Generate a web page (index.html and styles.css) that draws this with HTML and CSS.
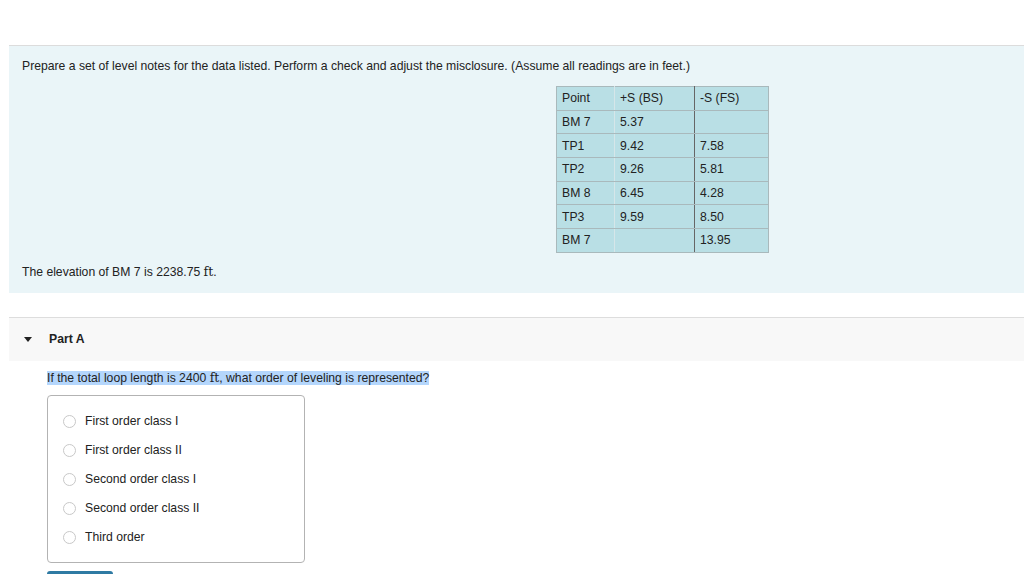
FILE: index.html
```html
<!DOCTYPE html>
<html>
<head>
<meta charset="utf-8">
<link rel="stylesheet" href="styles.css">
</head>
<body>
<div class="page">
  <div class="intro">
    <p class="lead">Prepare a set of level notes for the data listed. Perform a check and adjust the misclosure. (Assume all readings are in feet.)</p>
    <table class="data">
      <tr><td class="c1">Point</td><td class="c2">+S (BS)</td><td class="c3">-S (FS)</td></tr>
      <tr><td>BM 7</td><td>5.37</td><td></td></tr>
      <tr><td>TP1</td><td>9.42</td><td>7.58</td></tr>
      <tr><td>TP2</td><td>9.26</td><td>5.81</td></tr>
      <tr><td>BM 8</td><td>6.45</td><td>4.28</td></tr>
      <tr><td>TP3</td><td>9.59</td><td>8.50</td></tr>
      <tr><td>BM 7</td><td></td><td>13.95</td></tr>
    </table>
    <p class="elev">The elevation of BM 7 is 2238.75 <span class="unit">ft</span>.</p>
  </div>
  <div class="part-head">
    <span class="tri"></span><span class="part-title">Part A</span>
  </div>
  <div class="part-body">
    <p class="question"><span class="hl">If the total loop length is 2400 <span class="unit">ft</span>, what order of leveling is represented?</span></p>
    <div class="choices">
      <label class="choice"><span class="radio"></span>First order class I</label>
      <label class="choice"><span class="radio"></span>First order class II</label>
      <label class="choice"><span class="radio"></span>Second order class I</label>
      <label class="choice"><span class="radio"></span>Second order class II</label>
      <label class="choice"><span class="radio"></span>Third order</label>
    </div>
    <div class="submit"></div>
  </div>
</div>
</body>
</html>
```
FILE: styles.css
```css
html, body {
  margin: 0;
  padding: 0;
  background: #ffffff;
  overflow: hidden;
}
body {
  font-family: "Liberation Sans", Arial, Helvetica, sans-serif;
  font-size: 12.2px;
  color: #222222;
}
.page {
  padding-left: 9px;
  padding-top: 45px;
}
.intro {
  background: #eaf5f8;
  border-top: 1px solid #dcdcdc;
  padding: 13px 13px 13px 13px;
}
.lead {
  margin: 0;
  line-height: 14px;
}
.data {
  margin: 13px 0 0 534px;
  border-collapse: collapse;
  border: 1px solid #333333;
  background: #b9dfe5;
}
.data td {
  height: 22.7px;
  padding: 0 5px;
  border: 1px solid #a9b9bc;
  color: #222222;
  vertical-align: middle;
  line-height: 14px;
}
.data td:first-child {
  border-right-color: #d6e6e9;
}
.data td:nth-child(2) {
  border-right: 1px solid #666666;
}
.data td.c1 { width: 47px; }
.data td.c2 { width: 69px; }
.data td.c3 { width: 63px; }
.elev {
  margin: 11px 0 0 0;
  line-height: 16px;
}
.unit {
  font-family: "DejaVu Serif", "Liberation Serif", serif;
  font-size: 12.5px;
}
.part-head {
  margin-top: 24px;
  border-top: 1px solid #dddddd;
  background: #f8f8f8;
  height: 43px;
  display: flex;
  align-items: center;
}
.tri {
  width: 0;
  height: 0;
  border-left: 4px solid transparent;
  border-right: 4px solid transparent;
  border-top: 5px solid #222222;
  margin-left: 15px;
  margin-right: 17px;
}
.part-title {
  font-weight: bold;
  font-size: 12.2px;
  color: #222222;
}
.part-body {
  padding-left: 38px;
}
.question {
  margin: 9px 0 0 0;
  line-height: 16px;
}
.hl {
  background: #b4d6fc;
}
.choices {
  margin-top: 9px;
  width: 258px;
  height: 168px;
  border: 1px solid #b3b3b3;
  border-radius: 4px;
  box-sizing: border-box;
  display: flex;
  flex-direction: column;
  padding-top: 11px;
}
.choice {
  display: flex;
  align-items: center;
  height: 29px;
  padding-left: 15px;
  color: #222222;
}
.radio {
  width: 11px;
  height: 11px;
  border: 1px solid #c8c8c8;
  border-radius: 50%;
  background: #ffffff;
  margin-right: 9px;
}
.submit {
  margin-top: 8px;
  width: 66px;
  height: 4px;
  background: #2f7aa3;
  border-radius: 3px 3px 0 0;
}
```
